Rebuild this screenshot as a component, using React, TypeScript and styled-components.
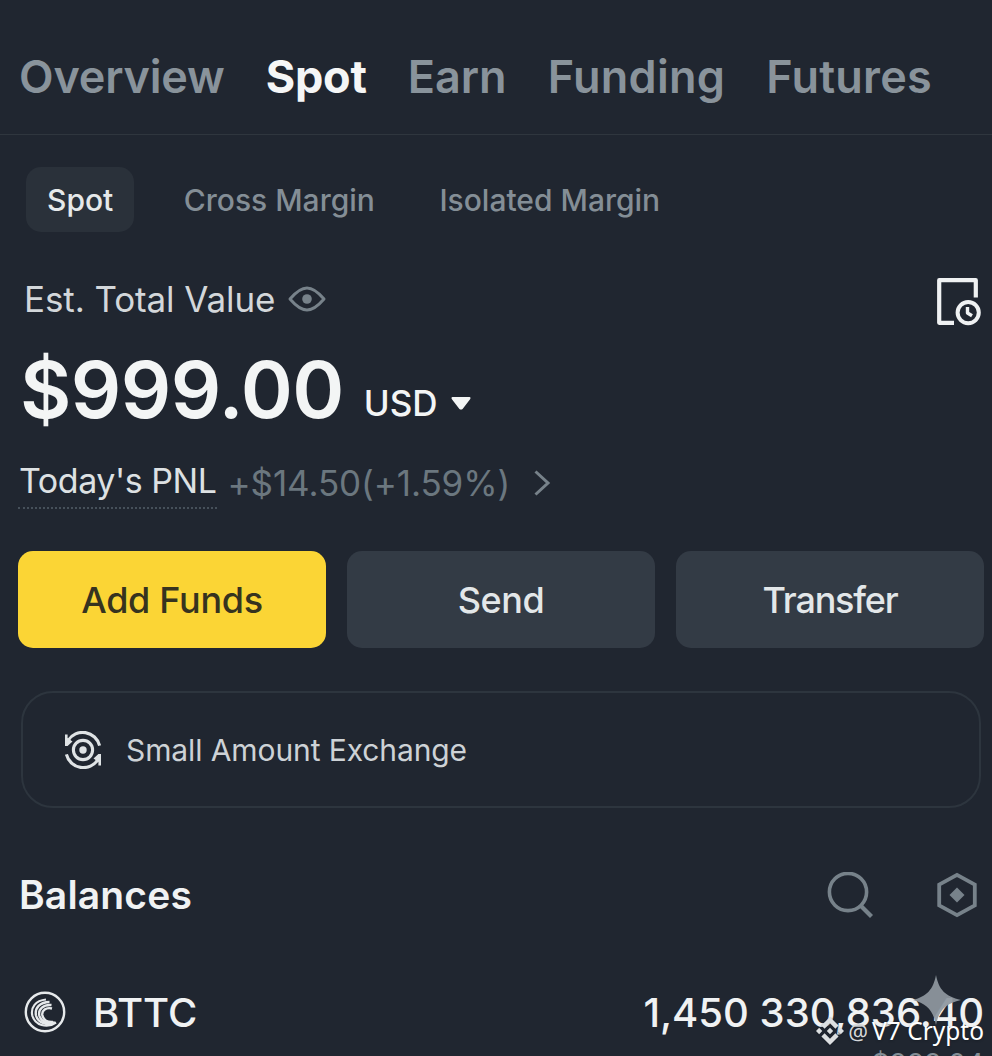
import { FC, useState } from "react";
import styled, { createGlobalStyle } from "styled-components";
import { SiBinance } from "react-icons/si";

const GlobalStyle = createGlobalStyle`
  * {
    box-sizing: border-box;
  }
  body {
    margin: 0;
    background-color: #202630;
  }
  button {
    border: none;
    padding: 0;
    background: none;
    font-family: inherit;
  }
  svg {
    display: block;
    flex-shrink: 0;
  }
`

const AppWrapper = styled.div`
  position: relative;
  width: 992px;
  height: 1056px;
  overflow: hidden;
  background-color: #202630;
  font-family: "Inter", "Liberation Sans", sans-serif;
  color: #eaecef;
  white-space: nowrap;
`

const TabBar = styled.nav`
  display: flex;
  gap: 41px;
  height: 135px;
  padding: 50px 0 0 19px;
  border-bottom: 1px solid #2f363e;
`

const Tab = styled.button<{ $active: boolean; $spacing: number }>`
  height: 54px;
  line-height: 54px;
  font-size: 45px;
  font-weight: ${({ $active }) => ($active ? 700 : 600)};
  letter-spacing: ${({ $spacing }) => $spacing}px;
  color: ${({ $active }) => ($active ? "#f5f6f6" : "#89939b")};
`

const SubTabBar = styled.div`
  display: flex;
  gap: 34.5px;
  padding: 32px 0 0 26px;
`

const SubTab = styled.button<{ $active: boolean }>`
  height: 65px;
  padding: 1px ${({ $active }) => ($active ? 21 : 15)}px 0;
  border-radius: 15px;
  font-size: 30px;
  line-height: 64px;
  font-weight: 500;
  color: ${({ $active }) => ($active ? "#e6e9ea" : "#848e96")};
  background-color: ${({ $active }) => ($active ? "#2a313a" : "transparent")};
`

const Summary = styled.section`
  padding: 46px 11px 0 20px;
`

const ValueHeader = styled.div`
  display: flex;
  justify-content: space-between;
  height: 48px;
  padding-left: 4px;
`

const ValueLabel = styled.div`
  display: flex;
  align-items: center;
  gap: 13px;
  height: 41px;
  font-size: 35px;
  letter-spacing: -0.1px;
  color: #d3d7da;
`

const AmountRow = styled.div`
  display: flex;
  align-items: flex-end;
  height: 80px;
  margin-top: 23px;
`

const Amount = styled.span`
  font-size: 79px;
  line-height: 80px;
  font-weight: 600;
  letter-spacing: -0.6px;
  color: #f3f5f5;
`

const Currency = styled.button`
  display: flex;
  align-items: center;
  gap: 13px;
  margin: 0 0 6px 20px;
  font-size: 35px;
  line-height: 40px;
  font-weight: 500;
  color: #f3f5f5;
`

const PnlRow = styled.div`
  display: flex;
  align-items: flex-start;
  margin-top: 29px;
`

const PnlLabel = styled.span`
  height: 51px;
  margin-left: -2px;
  padding: 1px 0 0 1px;
  line-height: 44px;
  font-size: 34px;
  letter-spacing: -0.45px;
  color: #dde1e3;
  border-bottom: 2px dotted #46505a;
`

const PnlValue = styled.span`
  display: flex;
  align-items: center;
  gap: 24px;
  height: 49px;
  margin-left: 11px;
  font-size: 35px;
  letter-spacing: -0.1px;
  color: #6b777f;
`

const Actions = styled.div`
  display: grid;
  grid-template-columns: repeat(3, 1fr);
  gap: 21px;
  padding: 42px 8px 0 18px;
`

const ActionButton = styled.button<{ $primary?: boolean; $spacing?: number }>`
  height: 97px;
  border-radius: 15px;
  font-size: 36px;
  font-weight: 500;
  letter-spacing: ${({ $spacing = 0 }) => $spacing}px;
  color: ${({ $primary }) => ($primary ? "#36331f" : "#e3e7e9")};
  background-color: ${({ $primary }) => ($primary ? "#fbd535" : "#333b45")};
`

const ExchangeCard = styled.div`
  display: flex;
  align-items: center;
  gap: 24px;
  height: 117px;
  margin: 43px 11px 0 21px;
  padding-left: 41px;
  border: 2px solid #2d353e;
  border-radius: 32px;
  font-size: 30px;
  letter-spacing: -0.1px;
  color: #cdd2d6;
`

const BalancesHeader = styled.div`
  display: flex;
  justify-content: space-between;
  align-items: center;
  height: 48px;
  margin-top: 63px;
  padding: 0 14px 0 19px;
`

const BalancesTitle = styled.h2`
  margin: 0;
  font-size: 39px;
  line-height: 48px;
  font-weight: 600;
  letter-spacing: 0.15px;
  color: #f0f2f3;
`

const HeaderIcons = styled.div`
  display: flex;
  align-items: center;
  gap: 62px;
`

const AssetRow = styled.div`
  display: flex;
  justify-content: space-between;
  align-items: center;
  height: 44px;
  margin-top: 71px;
  padding: 0 8px 0 23px;
  font-size: 40px;
  font-weight: 500;
  color: #f0f2f3;
`

const AssetName = styled.div`
  display: flex;
  align-items: center;
  gap: 26px;
`

const AssetFiat = styled.div`
  margin-top: 13px;
  padding-right: 8px;
  text-align: right;
  font-size: 28px;
  line-height: 34px;
  color: #848e96;
`

const Sparkle = styled.svg`
  position: absolute;
  left: 912px;
  top: 975px;
`

const Watermark = styled.div`
  position: absolute;
  right: 8px;
  bottom: 8px;
  display: flex;
  align-items: center;
  font-family: "Noto Sans", sans-serif;
  font-size: 24.5px;
  line-height: 34px;
  color: #fff;
  text-shadow: 0 1px 2px rgba(20, 26, 34, 0.6);
  > svg {
    margin-right: 4px;
    color: #dcdfe1;
    filter: drop-shadow(0 1px 1px rgba(20, 26, 34, 0.7));
  }
  > span {
    margin-right: 4px;
    font-size: 22px;
    color: #d5d8da;
  }
`

const EyeIcon = () => (
  <svg width="38" height="28" viewBox="0 0 38 28" fill="none">
    <path d="M2 14C8 7 13 3 19 3s11 4 17 11c-6 7-11 11-17 11S8 21 2 14z" stroke="#77828a" strokeWidth="3" strokeLinejoin="round" />
    <circle cx="19" cy="14" r="4.8" fill="#77828a" />
  </svg>
)

const HistoryIcon = () => (
  <svg width="44" height="48" viewBox="0 0 44 48" fill="none" stroke="#eff1f2" strokeLinejoin="round">
    <path d="M17 44.8H2.2V2.2H38.8V19.5" strokeWidth="4.2" />
    <circle cx="31.2" cy="34.6" r="10.6" strokeWidth="4" />
    <path d="M30.500 29v6l4.500 2.800" strokeWidth="3.4" />
  </svg>
)

const CaretIcon = () => (
  <svg width="20" height="14" viewBox="0 0 20 14">
    <path d="M1.500 1h17q1 0 1 1 0 .8-.6 1.500L11.600 13q-1.600 1-3.200 0L1.100 3.500Q.5 2.800.5 2q0-1 1-1z" fill="#f3f5f5" />
  </svg>
)

const ChevronIcon = () => (
  <svg width="18" height="28" viewBox="0 0 18 28" fill="none">
    <path d="M1.5 2.5L14 14 1.5 25.5" stroke="#77828a" strokeWidth="3" />
  </svg>
)

const ExchangeIcon = () => (
  <svg width="38" height="38" viewBox="0 0 38 38" fill="none" stroke="#dfe3e5" strokeWidth="3.1">
    <circle cx="19" cy="19" r="9.6" />
    <circle cx="19" cy="19" r="3.7" fill="#dfe3e5" stroke="none" />
    <path d="M4 9.500A17.4 17.4 0 0 1 35.6 14.6" />
    <path d="M34 28.500A17.4 17.4 0 0 1 2.4 23.4" />
    <path d="M1 3.500h2.600v3.500L8.500 10.500 3.600 15H1z" fill="#dfe3e5" stroke="none" />
    <path d="M37 34.500h-2.600V31L29.500 27.500 34.400 23H37z" fill="#dfe3e5" stroke="none" />
  </svg>
)

const SearchIcon = () => (
  <svg width="47" height="47" viewBox="0 0 47 47" fill="none" stroke="#77828a" strokeWidth="3.6">
    <circle cx="21" cy="20" r="18.6" />
    <path d="M33.5 33.500L44.5 44.500" strokeWidth="4.2" />
  </svg>
)

const HexagonIcon = () => (
  <svg width="42" height="46" viewBox="0 0 42 46" fill="none">
    <path d="M21 2.8L38.8 12.6v20.8L21 43.2 3.2 33.4V12.6z" stroke="#77828a" strokeWidth="3.8" />
    <path d="M21 15.5l7.5 7.5-7.5 7.5-7.5-7.5z" fill="#77828a" />
  </svg>
)

const BttcIcon = () => (
  <svg width="44" height="44" viewBox="0 0 44 44" fill="none" stroke="#e6e9eb">
    <circle cx="22" cy="22" r="19.2" strokeWidth="2.4" />
    <path d="M23 9.500C12.500 10.500 7.500 17.500 9.300 25.500 11.800 35 24 39 33 32.500" strokeWidth="2.200" />
    <path d="M26.500 12C17 12 11.500 18 13 25.500 15.200 33 24 36 32.500 32.500" strokeWidth="2.400" />
    <path d="M28.500 15C20.500 14.300 15 19.300 16.300 25.500 18 31.500 24 34.300 31.500 32.300" strokeWidth="2.400" />
    <path d="M29 18.500C23 17 18.700 20.500 19.300 25 20.300 29.500 24 32.500 30 32" strokeWidth="2.400" />
  </svg>
)

const TABS = [
  { name: "Overview", spacing: -0.2 },
  { name: "Spot", spacing: -0.2 },
  { name: "Earn", spacing: 0 },
  { name: "Funding", spacing: 0.3 },
  { name: "Futures", spacing: 0.2 },
]

const SUB_TABS = ["Spot", "Cross Margin", "Isolated Margin"]

const App: FC = () => {
  // 選択中のタブ
  const [tab, setTab] = useState<string>("Spot")
  const [subTab, setSubTab] = useState<string>("Spot")

  return (
    <AppWrapper>
      <GlobalStyle />
      <TabBar>
        {TABS.map(({ name, spacing }) => (
          <Tab key={name} $active={tab === name} $spacing={spacing} onClick={() => setTab(name)}>
            {name}
          </Tab>
        ))}
      </TabBar>
      <SubTabBar>
        {SUB_TABS.map((name) => (
          <SubTab key={name} $active={subTab === name} onClick={() => setSubTab(name)}>
            {name}
          </SubTab>
        ))}
      </SubTabBar>
      <Summary>
        <ValueHeader>
          <ValueLabel>
            Est. Total Value
            <EyeIcon />
          </ValueLabel>
          <HistoryIcon />
        </ValueHeader>
        <AmountRow>
          <Amount>$999.00</Amount>
          <Currency>
            USD
            <CaretIcon />
          </Currency>
        </AmountRow>
        <PnlRow>
          <PnlLabel>Today's PNL</PnlLabel>
          <PnlValue>
            +$14.50(+1.59%)
            <ChevronIcon />
          </PnlValue>
        </PnlRow>
      </Summary>
      <Actions>
        <ActionButton $primary $spacing={-0.3}>Add Funds</ActionButton>
        <ActionButton $spacing={-0.4}>Send</ActionButton>
        <ActionButton $spacing={-1.2}>Transfer</ActionButton>
      </Actions>
      <ExchangeCard>
        <ExchangeIcon />
        Small Amount Exchange
      </ExchangeCard>
      <BalancesHeader>
        <BalancesTitle>Balances</BalancesTitle>
        <HeaderIcons>
          <SearchIcon />
          <HexagonIcon />
        </HeaderIcons>
      </BalancesHeader>
      <AssetRow>
        <AssetName>
          <BttcIcon />
          BTTC
        </AssetName>
        <span>1,450 330,836.40</span>
      </AssetRow>
      <AssetFiat>$999.04</AssetFiat>
      <Sparkle width="50" height="50" viewBox="0 0 50 50">
        <path d="M24 0C27 15 33 21 49 25 33 29 27 35 24 50 21 35 15 29 1 25 15 21 21 15 24 0z" fill="#8f989f" fillOpacity="0.93" />
      </Sparkle>
      <Watermark>
        <SiBinance size={28} />
        <span>@</span>
        V7 Crypto
      </Watermark>
    </AppWrapper>
  )
}

export default App
